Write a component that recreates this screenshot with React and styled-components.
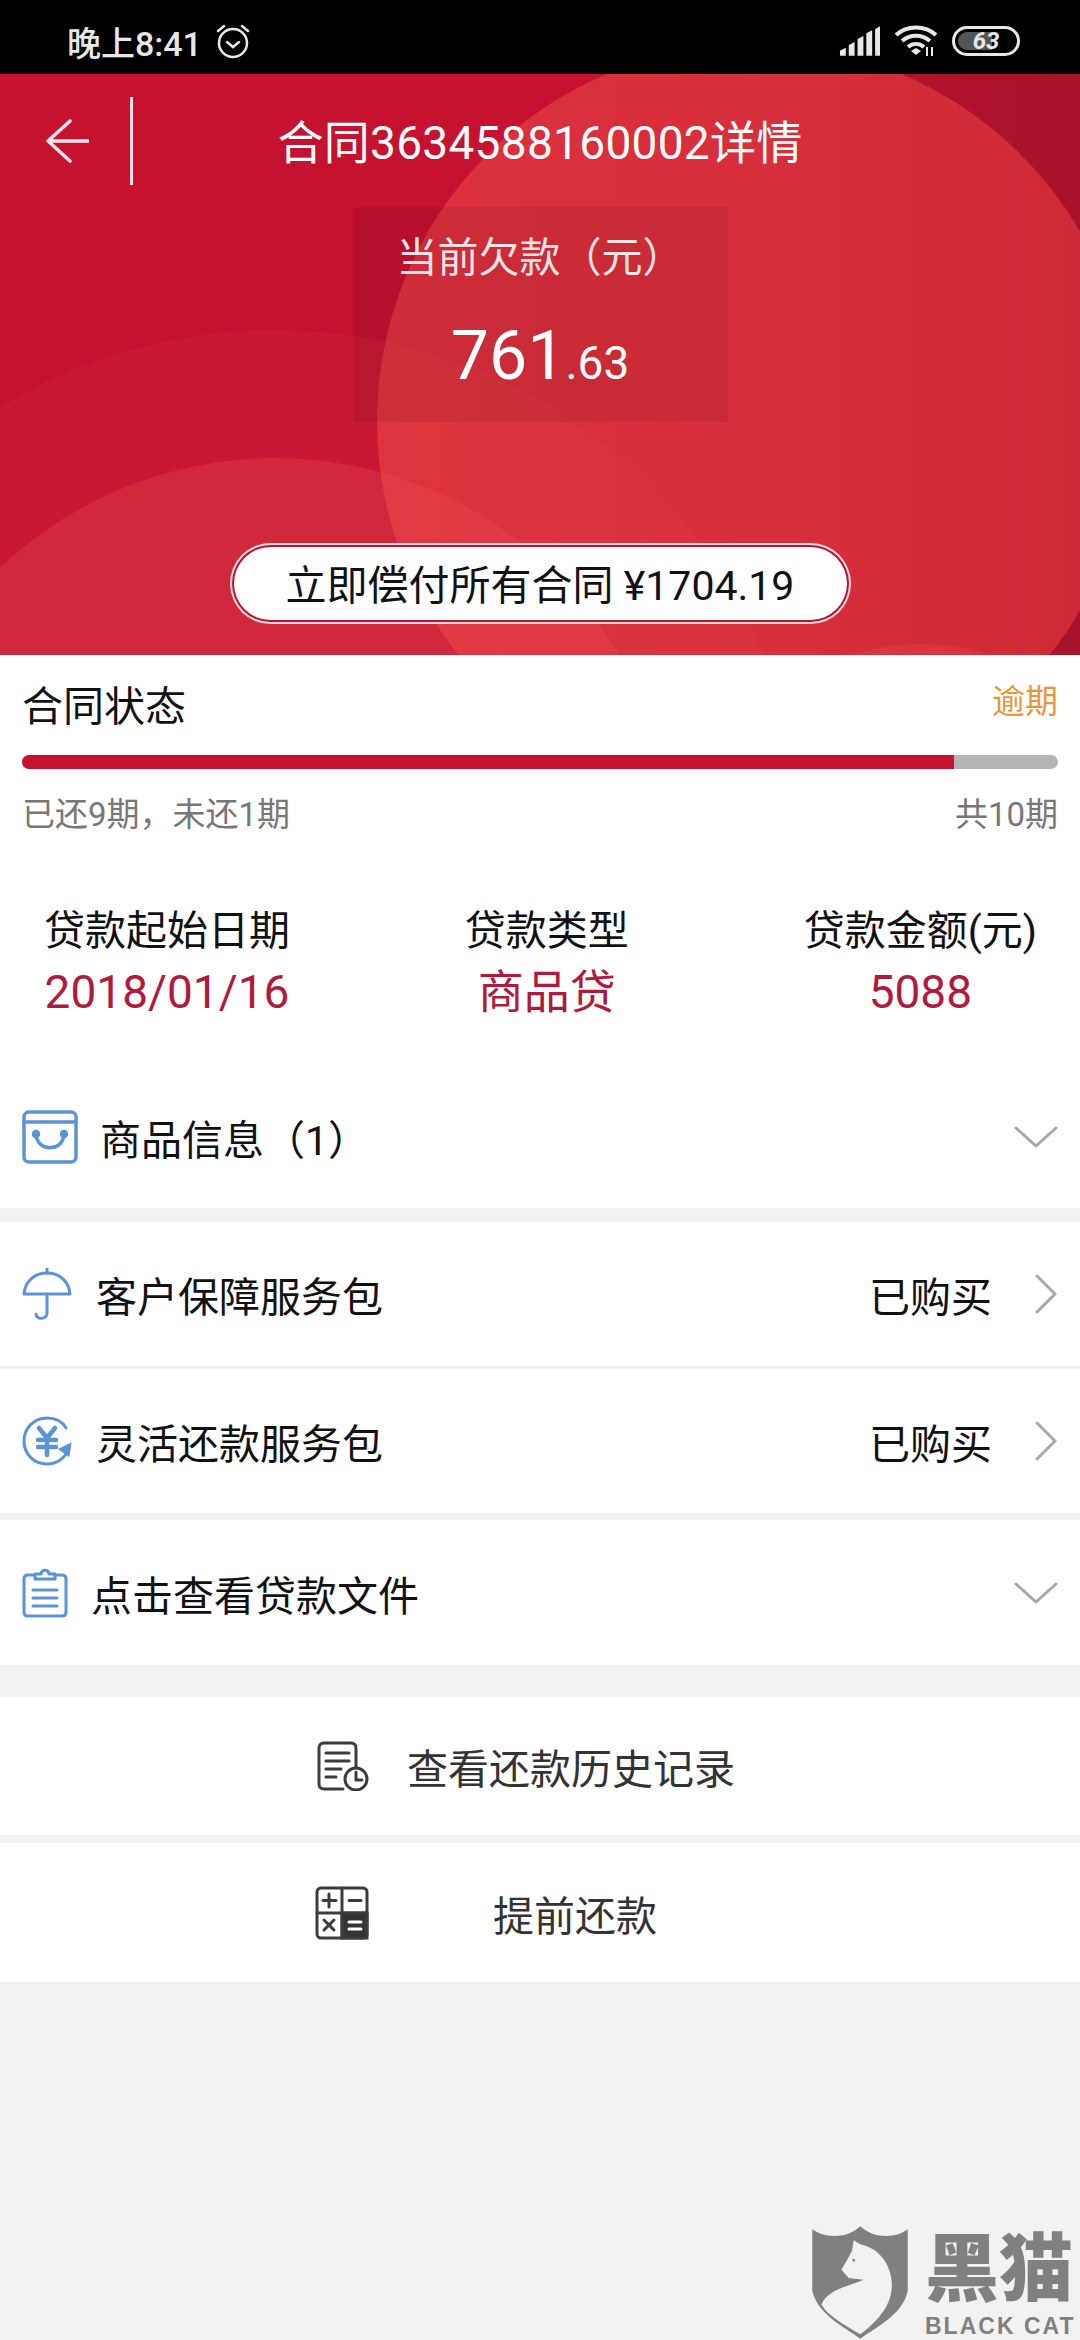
import React from 'react'
import styled, { createGlobalStyle } from 'styled-components'

const GlobalStyle = createGlobalStyle`
  html, body {
    margin: 0;
    padding: 0;
    background: #f2f2f2;
  }
  body {
    font-family: Roboto, "Noto Sans CJK SC", sans-serif;
    color: #111;
  }
`

const blue = '#5b94d6'
const crimson = '#c41230'

const Page = styled.div`
  position: relative;
  width: 1080px;
  height: 2340px;
  overflow: hidden;
  background: #f2f2f2;
`

const StatusBar = styled.div`
  display: flex;
  align-items: center;
  height: 74px;
  padding: 8px 60px 0 67px;
  box-sizing: border-box;
  background: #000;
  color: #e8e8e8;
`

const Clock = styled.span`
  font-size: 34px;
  font-weight: 500;
  margin-right: 13px;
`

const StatusIcons = styled.div`
  display: flex;
  align-items: center;
  gap: 14px;
  margin-left: auto;
`

const Battery = styled.div`
  position: relative;
  width: 68px;
  height: 30px;
  box-sizing: border-box;
  border: 3px solid #e8e8e8;
  border-radius: 15px;
  padding: 3px;
  display: flex;
  align-items: center;
  justify-content: center;
  font-size: 24px;
  font-weight: 700;
  font-style: italic;
  background: linear-gradient(90deg, #555 0 60%, transparent 60%);
  background-clip: content-box;
`

const Hero = styled.header`
  position: relative;
  height: 581px;
  overflow: hidden;
  color: #fff;
  background: linear-gradient(90deg, #c41230 0%, #c41230 60%, #a8132a 100%);
`

const Bubble = styled.div`
  position: absolute;
  left: ${({ $x, $r }) => $x - $r}px;
  top: ${({ $y, $r }) => $y - $r}px;
  width: ${({ $r }) => $r * 2}px;
  height: ${({ $r }) => $r * 2}px;
  border-radius: 50%;
  background: ${({ $fill }) => $fill};
`

const HeroBody = styled.div`
  position: relative;
  display: flex;
  flex-direction: column;
  align-items: center;
  height: 100%;
  padding-top: 23px;
  box-sizing: border-box;
`

const Nav = styled.div`
  display: grid;
  grid-template-columns: 1fr auto 1fr;
  align-items: center;
  width: 100%;
  height: 88px;
`

const BackCell = styled.div`
  display: flex;
  align-items: center;
  height: 100%;
  padding-left: 45px;
`

const Divider = styled.div`
  width: 3px;
  height: 88px;
  margin-left: 41px;
  background: #f6dfe3;
`

const Title = styled.h1`
  margin: 0 0 4px;
  font-size: 46px;
  font-weight: 400;
  letter-spacing: 0.3px;
  white-space: nowrap;
`

const DebtCard = styled.div`
  display: flex;
  flex-direction: column;
  align-items: center;
  width: 375px;
  height: 215px;
  margin-top: 22px;
  padding-top: 24px;
  box-sizing: border-box;
  background: rgba(0, 0, 0, 0.07);
`

const DebtLabel = styled.div`
  font-size: 41px;
  line-height: 54px;
  color: #f8e4e6;
`

const DebtAmount = styled.div`
  margin-top: 29px;
  font-size: 68px;
  line-height: 84px;
  white-space: nowrap;
  small {
    font-size: 46px;
  }
`

const PayButton = styled.div`
  display: flex;
  align-items: center;
  justify-content: center;
  width: 613px;
  height: 73px;
  margin-top: 125px;
  padding-bottom: 4px;
  box-sizing: border-box;
  border-radius: 37px;
  background: #fff;
  box-shadow: 0 0 0 2px #b5152f, 0 0 0 4px #f3d9dc;
  color: #111;
  font-size: 41px;
  white-space: nowrap;
`

const StatusSection = styled.section`
  background: #fff;
  padding: 25px 22px 0;
  height: 248px;
  box-sizing: border-box;
`

const SpreadRow = styled.div`
  display: flex;
  justify-content: space-between;
  align-items: ${({ $align }) => $align || 'center'};
`

const StatusTitle = styled.div`
  font-size: 41px;
  line-height: 54px;
`

const OverdueTag = styled.div`
  font-size: 33px;
  line-height: 44px;
  color: #e8963c;
`

const Progress = styled.div`
  height: 14px;
  margin-top: 21px;
  border-radius: 7px;
  overflow: hidden;
  background: #b5b5b5;
`

const ProgressFill = styled.div`
  height: 100%;
  background: ${crimson};
`

const PeriodText = styled.div`
  margin-top: 23px;
  font-size: 33px;
  line-height: 46px;
  color: #777;
`

const Stats = styled.div`
  display: flex;
  justify-content: space-between;
  height: 163px;
  padding: 0 43px 0 44px;
  background: #fff;
  box-sizing: border-box;
`

const Stat = styled.div`
  display: flex;
  flex-direction: column;
  align-items: center;
  white-space: nowrap;
`

const StatLabel = styled.div`
  font-size: 41px;
  line-height: 56px;
`

const StatValue = styled.div`
  margin-top: 3px;
  font-size: 46px;
  line-height: 60px;
  color: #b11a3c;
`

const Row = styled.div`
  display: flex;
  align-items: center;
  height: ${({ $h }) => $h}px;
  margin-bottom: ${({ $gap }) => $gap || 0}px;
  padding: 0 22px;
  box-sizing: border-box;
  background: #fff;
`

const IconSlot = styled.div`
  flex: none;
  display: flex;
  align-items: center;
  width: ${({ $w }) => $w}px;
`

const RowLabel = styled.div`
  font-size: 41px;
  white-space: nowrap;
`

const RowNote = styled.div`
  margin-left: auto;
  margin-right: 42px;
  font-size: 41px;
`

const Action = styled.div`
  display: flex;
  align-items: center;
  height: ${({ $h }) => $h}px;
  margin-top: ${({ $top }) => $top}px;
  padding-left: ${({ $left }) => $left}px;
  gap: ${({ $gap }) => $gap}px;
  background: #fff;
  color: #333;
  font-size: 41px;
`

const Watermark = styled.div`
  position: absolute;
  left: 811px;
  top: 2225px;
  display: flex;
  gap: 16px;
  color: #808080;
`

const MarkText = styled.div`
  display: flex;
  flex-direction: column;
`

const MarkName = styled.div`
  font-size: 74px;
  line-height: 90px;
  font-weight: 900;
  white-space: nowrap;
`

const MarkLatin = styled.div`
  font-family: "Liberation Sans", sans-serif;
  font-size: 23px;
  line-height: 22px;
  font-weight: 700;
  letter-spacing: 2px;
  white-space: nowrap;
`

const AlarmIcon = () => (
  <svg width="36" height="36" viewBox="0 0 36 36" fill="none" stroke="#e8e8e8" strokeWidth="2.5" strokeLinecap="round">
    <circle cx="18" cy="20" r="14" />
    <path d="M12 19l6 5 6-5" />
    <path d="M3 8l6-5M33 8l-6-5" />
  </svg>
)

const SignalIcon = () => (
  <svg width="41" height="30" viewBox="0 0 42 30" fill="#e8e8e8">
    <path d="M1 30v-5l6-3v8zM10 30V19l6-3v14zM19 30V13l6-3v20zM28 30V7l6-3v26zM37 30V3l5-3v30z" />
  </svg>
)

const WifiIcon = () => (
  <svg width="44" height="32" viewBox="0 0 44 32" fill="none" stroke="#e8e8e8" strokeWidth="4">
    <path d="M2 10c11-10 29-10 40 0" />
    <path d="M8 16c8-7 20-7 28 0" />
    <path d="M14 22c5-4 11-4 16 0" />
    <path d="M17 26l5-3 5 3-5 4z" fill="#e8e8e8" stroke="none" />
    <path d="M33 31v-9M38 22v9" strokeWidth="2" />
  </svg>
)

const BackIcon = () => (
  <svg width="44" height="44" viewBox="0 0 44 44" fill="none" stroke="#fbe6e9" strokeWidth="3.5" strokeLinecap="round" strokeLinejoin="round">
    <path d="M43 22H3M25 2L3 22l22 20" />
  </svg>
)

const BagIcon = () => (
  <svg width="56" height="54" viewBox="0 0 56 54" fill="none" stroke={blue} strokeWidth="3.5" strokeLinecap="round" strokeLinejoin="round">
    <rect x="2" y="2" width="52" height="50" rx="5" />
    <path d="M2 12h52" />
    <path d="M14 25c2 17 26 17 28 0" />
    <circle cx="14" cy="24" r="2.5" fill={blue} />
    <circle cx="42" cy="24" r="2.5" fill={blue} />
  </svg>
)

const UmbrellaIcon = () => (
  <svg width="50" height="52" viewBox="0 0 50 52" fill="none" stroke={blue} strokeWidth="3" strokeLinecap="round" strokeLinejoin="round">
    <path d="M2 26C3 13 13 5 25 5s22 8 23 21z" />
    <path d="M25 1v4M25 26v19c0 7-11 7-11 1" />
  </svg>
)

const RefundIcon = () => (
  <svg width="50" height="50" viewBox="0 0 50 50" fill="none" stroke={blue} strokeWidth="3" strokeLinecap="round" strokeLinejoin="round">
    <path d="M44 12C40 5 33 2 25 2 12 2 2 12 2 25s10 23 23 23c10 0 18-6 21-14" />
    <path d="M17 12l8 10 8-10M16 24h18M16 31h18M25 22v17" strokeWidth="4.5" />
    <path d="M37 33l12-6-2 13z" fill={blue} strokeWidth="1" />
  </svg>
)

const ClipboardIcon = () => (
  <svg width="46" height="50" viewBox="0 0 46 50" fill="none" stroke={blue} strokeWidth="3" strokeLinecap="round" strokeLinejoin="round">
    <path d="M13 7H6C3 7 2 9 2 11v33c0 3 2 4 4 4h34c3 0 4-2 4-4V11c0-3-2-4-4-4h-7" />
    <path d="M13 11V6h6c0-5 8-5 8 0h6v5z" />
    <path d="M11 22h24M11 30h24M11 38h24" />
  </svg>
)

const HistoryIcon = () => (
  <svg width="52" height="50" viewBox="0 0 52 50" fill="none" stroke="#3c3c3c" strokeWidth="3" strokeLinecap="round" strokeLinejoin="round">
    <path d="M26 48H7c-3 0-5-2-5-5V7c0-3 2-5 5-5h27c3 0 5 2 5 5v19" />
    <path d="M9 12h23M9 20h23M9 28h15M9 36h10" />
    <circle cx="39" cy="38" r="11" />
    <path d="M39 31v8h6" />
  </svg>
)

const CalcIcon = () => (
  <svg width="54" height="54" viewBox="0 0 54 54" fill="none" stroke="#3c3c3c" strokeWidth="3" strokeLinecap="round">
    <rect x="2" y="2" width="50" height="50" rx="4" />
    <path d="M27 2v50M2 27h50" />
    <rect x="27" y="27" width="25" height="25" fill="#333" />
    <path d="M14 8v13M8 14.500h13M34 14.500h12M9 34l10 10M19 34L9 44" />
    <path d="M34 36h12M34 43h12" stroke="#fff" />
  </svg>
)

const DownMark = styled.svg`
  margin-left: auto;
`

const ChevronDown = () => (
  <DownMark width="44" height="24" viewBox="0 0 44 24" fill="none" stroke="#a8a8a8" strokeWidth="3" strokeLinecap="round" strokeLinejoin="round">
    <path d="M2 3l20 18L42 3" />
  </DownMark>
)

const ChevronRight = () => (
  <svg width="24" height="40" viewBox="0 0 24 40" fill="none" stroke="#a8a8a8" strokeWidth="3" strokeLinecap="round" strokeLinejoin="round">
    <path d="M3 2l18 18L3 38" />
  </svg>
)

const ShieldLogo = () => (
  <svg width="98" height="114" viewBox="92 72 294 344">
    <path d="M95 85C130 112 200 115 240 76 280 115 350 112 383 85V270C372 335 300 375 240 415 180 375 108 335 95 270Z" fill="#808080" />
    <path d="M220 118L241 131C300 142 338 200 335 258 332 320 290 362 240 402 190 372 140 345 123 312 140 268 200 258 250 237L205 232 183 207 203 172 215 150Z" fill="#f2f2f2" />
    <circle cx="220" cy="178" r="4" fill="#808080" />
  </svg>
)

export default function App() {
  return (
    <Page>
      <GlobalStyle />
      <StatusBar>
        <Clock>晚上8:41</Clock>
        <AlarmIcon />
        <StatusIcons>
          <SignalIcon />
          <WifiIcon />
          <Battery>63</Battery>
        </StatusIcons>
      </StatusBar>

      <Hero>
        <Bubble $x={754} $y={347} $r={377} $fill="linear-gradient(90deg, #dc313d 0%, #d72e3b 55%, #cc2935 100%)" />
        <Bubble $x={275} $y={786} $r={530} $fill="rgba(233, 76, 80, 0.1)" />
        <Bubble $x={275} $y={783} $r={399} $fill="rgba(233, 76, 80, 0.32)" />
        <Bubble $x={920} $y={800} $r={230} $fill="rgba(240, 90, 90, 0.2)" />
        <HeroBody>
          <Nav>
            <BackCell>
              <BackIcon />
              <Divider />
            </BackCell>
            <Title>合同3634588160002详情</Title>
            <span />
          </Nav>
          <DebtCard>
            <DebtLabel>当前欠款（元）</DebtLabel>
            <DebtAmount>761<small>.63</small></DebtAmount>
          </DebtCard>
          <PayButton>立即偿付所有合同 ¥1704.19</PayButton>
        </HeroBody>
      </Hero>

      <StatusSection>
        <SpreadRow $align="flex-start">
          <StatusTitle>合同状态</StatusTitle>
          <OverdueTag>逾期</OverdueTag>
        </SpreadRow>
        <Progress>
          <ProgressFill style={{ width: `${(9 / 10) * 100}%` }} />
        </Progress>
        <PeriodText>
          <SpreadRow>
            <span>已还9期，未还1期</span>
            <span>共10期</span>
          </SpreadRow>
        </PeriodText>
      </StatusSection>

      <Stats>
        <Stat>
          <StatLabel>贷款起始日期</StatLabel>
          <StatValue>2018/01/16</StatValue>
        </Stat>
        <Stat>
          <StatLabel>贷款类型</StatLabel>
          <StatValue>商品贷</StatValue>
        </Stat>
        <Stat>
          <StatLabel>贷款金额(元)</StatLabel>
          <StatValue>5088</StatValue>
        </Stat>
      </Stats>

      <Row $h={142} $gap={14}>
        <IconSlot $w={78}><BagIcon /></IconSlot>
        <RowLabel>商品信息（1）</RowLabel>
        <ChevronDown />
      </Row>
      <Row $h={144} $gap={3}>
        <IconSlot $w={74}><UmbrellaIcon /></IconSlot>
        <RowLabel>客户保障服务包</RowLabel>
        <RowNote>已购买</RowNote>
        <ChevronRight />
      </Row>
      <Row $h={144} $gap={7}>
        <IconSlot $w={74}><RefundIcon /></IconSlot>
        <RowLabel>灵活还款服务包</RowLabel>
        <RowNote>已购买</RowNote>
        <ChevronRight />
      </Row>
      <Row $h={145}>
        <IconSlot $w={69}><ClipboardIcon /></IconSlot>
        <RowLabel>点击查看贷款文件</RowLabel>
        <ChevronDown />
      </Row>

      <Action $h={138} $top={32} $left={317} $gap={38}>
        <HistoryIcon />
        <span>查看还款历史记录</span>
      </Action>
      <Action $h={139} $top={8} $left={315} $gap={124}>
        <CalcIcon />
        <span>提前还款</span>
      </Action>

      <Watermark>
        <ShieldLogo />
        <MarkText>
          <MarkName>黑猫</MarkName>
          <MarkLatin>BLACK CAT</MarkLatin>
        </MarkText>
      </Watermark>
    </Page>
  )
}
